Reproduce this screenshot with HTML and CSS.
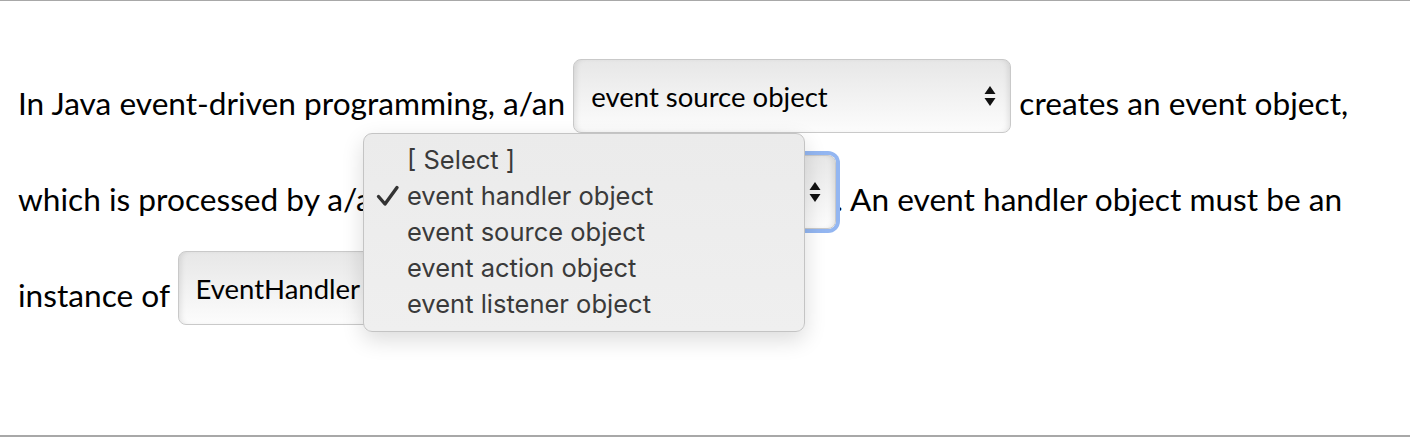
FILE: index.html
```html
<!DOCTYPE html>
<html>
<head>
<meta charset="utf-8">
<link rel="stylesheet" href="styles.css">
</head>
<body>
<div class="frame">
  <p class="question">In Java event-driven programming, a/an <span class="select"><span class="value">event source object</span><svg class="arrows" width="12" height="22" viewBox="0 0 12 22"><path d="M6 1 L11.5 9 L0.5 9 Z M6 21 L11.5 13 L0.5 13 Z" fill="#111"/></svg></span> creates an event object, which is processed by a/an <span class="select focused"><span class="value">event handler object</span><svg class="arrows" width="12" height="22" viewBox="0 0 12 22"><path d="M6 1 L11.5 9 L0.5 9 Z M6 21 L11.5 13 L0.5 13 Z" fill="#111"/></svg></span>. An event handler object must be an instance of <span class="select"><span class="value">EventHandler</span><svg class="arrows" width="12" height="22" viewBox="0 0 12 22"><path d="M6 1 L11.5 9 L0.5 9 Z M6 21 L11.5 13 L0.5 13 Z" fill="#111"/></svg></span></p>
  <div class="menu">
    <div class="item">[ Select ]</div>
    <div class="item checked"><svg class="check" width="24" height="22" viewBox="0 0 24 22"><path d="M2.5 11.5 L9 19 L21 2.5" fill="none" stroke="#333" stroke-width="3.4" stroke-linecap="round" stroke-linejoin="round"/></svg>event handler object</div>
    <div class="item">event source object</div>
    <div class="item">event action object</div>
    <div class="item">event listener object</div>
  </div>
</div>
</body>
</html>
```
FILE: styles.css
```css
html, body {
  margin: 0;
  padding: 0;
  background: #fff;
}
.frame {
  position: relative;
  border-top: 1px solid #a8a8a8;
  border-bottom: 2px solid #a8a8a8;
  padding: 54px 18px 92px 18px;
  height: 288px;
}
.question {
  margin: 0;
  font-family: Lato, "Liberation Sans", sans-serif;
  font-size: 31.65px;
  line-height: 96px;
  color: #000;
  width: 1360px;
}
.select {
  display: inline-flex;
  align-items: center;
  justify-content: space-between;
  box-sizing: border-box;
  width: 438px;
  height: 74px;
  vertical-align: middle;
  padding: 0 14px 0 17px;
  border: 1px solid #c9c9c9;
  border-radius: 8px;
  background: linear-gradient(#e7e7e7, #fcfcfc);
  box-shadow: inset 5px 0 6px -4px rgba(0,0,0,0.12), inset -5px 0 6px -4px rgba(0,0,0,0.12);
  font-family: Lato, "Liberation Sans", sans-serif;
  font-size: 27.5px;
  line-height: 1;
  color: #000;
  position: relative;
  top: -11px;
}
.value {
  position: relative;
  top: 1px;
}
.focused {
  box-shadow: 0 0 0 4px #93b6f1, inset 5px 0 6px -4px rgba(0,0,0,0.12), inset -5px 0 6px -4px rgba(0,0,0,0.12);
}
.menu {
  position: absolute;
  left: 363px;
  top: 132px;
  width: 442px;
  box-sizing: border-box;
  padding: 8px 0 9px 0;
  background: linear-gradient(#ebebeb, #efefef);
  border: 1px solid #c4c4c4;
  border-radius: 9px;
  box-shadow: 0 8px 22px rgba(0,0,0,0.14);
  font-family: Inter, "Noto Sans", sans-serif;
  font-size: 25.5px;
  color: #3a3a3a;
}
.item {
  position: relative;
  height: 36px;
  line-height: 35px;
  padding-left: 43px;
}
.check {
  position: absolute;
  left: 12px;
  top: 7px;
}
```
